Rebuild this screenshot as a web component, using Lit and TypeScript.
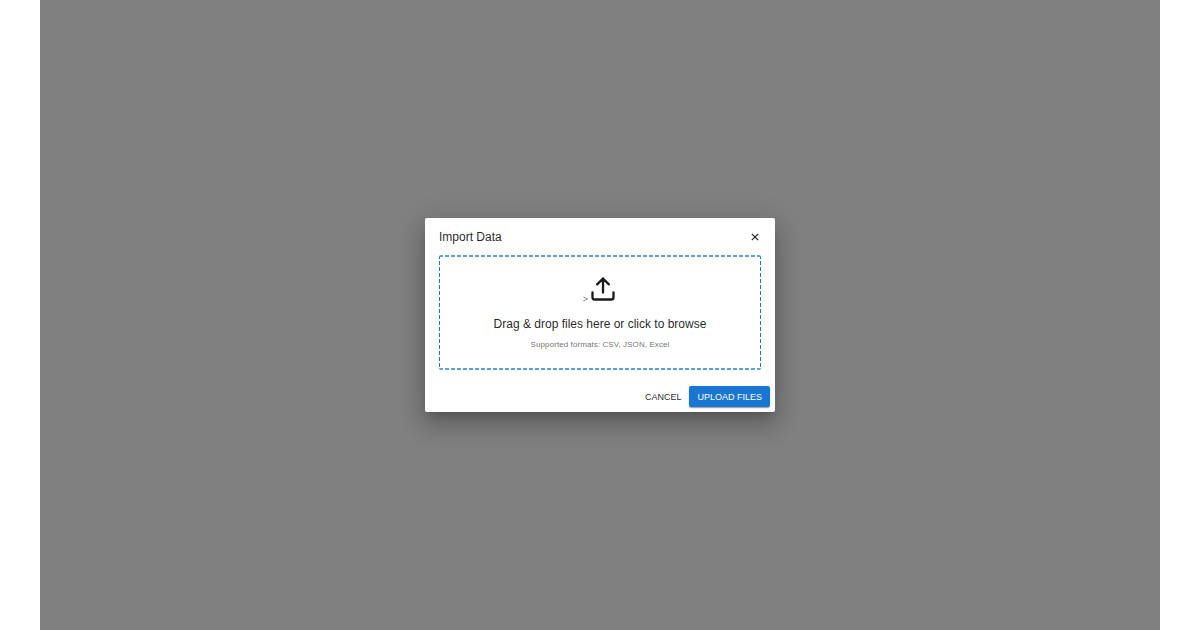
import { LitElement, html, css } from "lit";
import { customElement } from "lit/decorators.js";

@customElement("app-root")
export class AppRoot extends LitElement {
  static styles = css`
    :host {
      display: block;
      background: #fff;
      color: rgba(0, 0, 0, 0.87);
      font-family: "Liberation Sans", Arial, sans-serif;
    }
    .backdrop {
      display: flex;
      align-items: center;
      justify-content: center;
      min-height: 100vh;
      margin: 0 40px;
      background: #808080;
      overflow: hidden;
    }
    .dialog {
      display: flex;
      flex-direction: column;
      width: 100%;
      max-width: 350px;
      border-radius: 2px;
      background: #fff;
      box-shadow:
        0 6px 9px -4px rgba(0, 0, 0, 0.2),
        0 14px 22px 2px rgba(0, 0, 0, 0.14),
        0 5px 27px 5px rgba(0, 0, 0, 0.12);
    }
    .header {
      display: flex;
      align-items: center;
      justify-content: space-between;
      padding: 9px 14px 8px;
    }
    h2,
    h3,
    p {
      margin: 0;
      font-weight: 400;
    }
    h2,
    h3 {
      font-size: 12px;
      line-height: 20px;
    }
    button {
      border: 0;
      border-radius: 2px;
      background: none;
      color: inherit;
      font: inherit;
      cursor: pointer;
    }
    .close {
      display: flex;
      padding: 2px;
    }
    .close svg {
      width: 8px;
      height: 8px;
    }
    .body {
      padding: 0 14px 11px;
    }
    .dropzone {
      --dash: #1976d2 0 4px, transparent 4px 6px;
      --soft-dash: #5e9fe0 0 4px, transparent 4px 6px;
      display: block;
      box-sizing: border-box;
      padding: 20px 19px 19px;
      border-radius: 2px;
      background:
        repeating-linear-gradient(to right, var(--soft-dash)) top / 100% 2px no-repeat,
        repeating-linear-gradient(to right, var(--soft-dash)) bottom / 100% 2px no-repeat,
        repeating-linear-gradient(to bottom, var(--dash)) left / 1px 100% no-repeat,
        repeating-linear-gradient(to bottom, var(--dash)) right / 1px 100% no-repeat;
      text-align: center;
      cursor: pointer;
    }
    .art {
      display: flex;
      align-items: flex-end;
      justify-content: center;
      gap: 1px;
      color: rgba(0, 0, 0, 0.6);
      font-size: 9px;
      line-height: 8px;
    }
    .art svg {
      width: 28px;
      height: 28px;
      color: #1a1a1a;
    }
    .dropzone h3 {
      margin-top: 11px;
    }
    .formats {
      margin-top: 5px;
      color: rgba(0, 0, 0, 0.6);
      font-size: 8px;
      line-height: 12px;
      letter-spacing: 0.01071em;
    }
    .actions {
      display: flex;
      justify-content: flex-end;
      padding: 5px;
    }
    .action {
      padding: 5px 8px 3px;
      font-size: 9px;
      line-height: 13px;
      text-transform: uppercase;
    }
    .primary {
      background: #1976d2;
      color: #fff;
      box-shadow:
        0 2px 1px -1px rgba(0, 0, 0, 0.2),
        0 1px 1px rgba(0, 0, 0, 0.14),
        0 1px 3px rgba(0, 0, 0, 0.12);
    }
    .file {
      display: none;
    }
  `;

  private browse() {
    this.renderRoot.querySelector<HTMLInputElement>(".file")?.click();
  }

  render() {
    return html`
      <div class="backdrop">
        <section class="dialog" role="dialog" aria-modal="true" aria-labelledby="title">
          <header class="header">
            <h2 id="title">Import Data</h2>
            <button class="close" type="button" aria-label="Close">
              <svg viewBox="0 0 8 8" fill="none" stroke="currentColor" stroke-width="1.2">
                <path d="M.8.8L7.2 7.2M7.2.8L.8 7.2" />
              </svg>
            </button>
          </header>
          <div class="body">
            <label class="dropzone" for="files">
              <div class="art">
                <span>&gt;</span>
                <svg viewBox="0 0 24 24" fill="none" stroke="currentColor" stroke-width="2" stroke-linecap="round" stroke-linejoin="round">
                  <path d="M21 15v4a2 2 0 0 1-2 2H5a2 2 0 0 1-2-2v-4M17 8l-5-5-5 5M12 3v12" />
                </svg>
              </div>
              <h3>Drag &amp; drop files here or click to browse</h3>
              <p class="formats">Supported formats: CSV, JSON, Excel</p>
            </label>
            <input class="file" id="files" type="file" multiple accept=".csv,.json,.xls,.xlsx" />
          </div>
          <footer class="actions">
            <button class="action" type="button">Cancel</button>
            <button class="action primary" type="button" @click=${this.browse}>Upload Files</button>
          </footer>
        </section>
      </div>
    `;
  }
}
